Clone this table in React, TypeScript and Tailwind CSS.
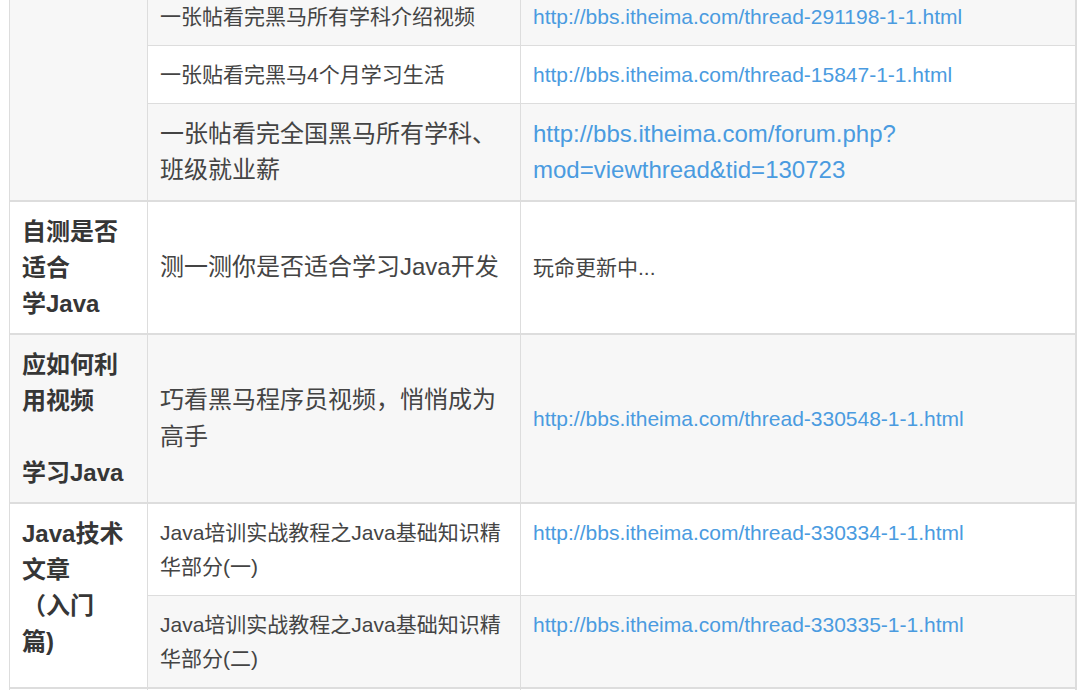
import React from 'react';

type Row = {
  text: React.ReactNode;
  big?: boolean;
  link?: React.ReactNode;
  linkBig?: boolean;
  plain?: boolean;
  top?: boolean;
};

type Group = {
  title?: React.ReactNode;
  rows: Row[];
};

const groups: Group[] = [
  {
    rows: [
      { text: '一张帖看完黑马所有学科介绍视频', link: 'http://bbs.itheima.com/thread-291198-1-1.html' },
      { text: '一张贴看完黑马4个月学习生活', link: 'http://bbs.itheima.com/thread-15847-1-1.html' },
      {
        text: '一张帖看完全国黑马所有学科、班级就业薪',
        big: true,
        linkBig: true,
        link: (
          <>
            http://bbs.itheima.com/forum.php?
            <br />
            mod=viewthread&amp;tid=130723
          </>
        ),
      },
    ],
  },
  {
    title: (
      <>
        自测是否
        <br />
        适合
        <br />
        学Java
      </>
    ),
    rows: [{ text: '测一测你是否适合学习Java开发', big: true, plain: true, link: '玩命更新中...' }],
  },
  {
    title: (
      <>
        应如何利
        <br />
        用视频
        <br />
        <br />
        学习Java
      </>
    ),
    rows: [
      { text: '巧看黑马程序员视频，悄悄成为高手', big: true, link: 'http://bbs.itheima.com/thread-330548-1-1.html' },
    ],
  },
  {
    title: (
      <>
        Java技术
        <br />
        文章
        <br />
        （入门
        <br />
        篇)
      </>
    ),
    rows: [
      { text: 'Java培训实战教程之Java基础知识精华部分(一)', top: true, link: 'http://bbs.itheima.com/thread-330334-1-1.html' },
      { text: 'Java培训实战教程之Java基础知识精华部分(二)', top: true, link: 'http://bbs.itheima.com/thread-330335-1-1.html' },
    ],
  },
  {
    title: <>&nbsp;</>,
    rows: [{ text: <>&nbsp;</>, link: <>&nbsp;</> }],
  },
];

export default function App() {
  let stripe = 0;

  return (
    <div className="h-[690px] w-[1084px] overflow-hidden bg-white font-['Liberation_Sans','Noto_Sans_CJK_SC',sans-serif]">
      <table className="-mt-[13px] ml-[9px] w-[1068px] table-fixed border-collapse border-l border-r-2 border-[#ddd]">
        <colgroup>
          <col className="w-[138px]" />
          <col className="w-[373px]" />
          <col />
        </colgroup>
        {groups.map((g, gi) => (
          <tbody key={gi} className={gi > 0 ? 'border-t-2 border-[#ddd]' : ''}>
            {g.rows.map((r, ri) => {
              const gray = stripe++ % 2 === 0;
              return (
                <tr key={ri} className={gray ? 'bg-[#f7f7f7]' : 'bg-white'}>
                  {ri === 0 && (
                    <td
                      rowSpan={g.rows.length}
                      className="border border-[#ddd] px-[12px] py-[11.5px] align-top whitespace-nowrap text-[24px] leading-[36px] font-bold text-[#363636]"
                    >
                      {g.title}
                    </td>
                  )}
                  <td
                    className={`border border-[#ddd] px-[12px] py-[11.5px] align-middle text-[#444] ${
                      r.big ? 'text-[24px] leading-[36.5px]' : 'text-[21px] leading-[34px]'
                    }`}
                  >
                    {r.text}
                  </td>
                  <td
                    className={`border border-[#ddd] px-[12px] py-[11.5px] ${r.top ? 'align-top' : 'align-middle'} ${
                      r.linkBig ? 'text-[24px] leading-[36.5px]' : 'text-[21px] leading-[34px]'
                    } ${r.plain ? 'text-[#444]' : 'text-[#4a9be0]'}`}
                  >
                    {r.link}
                  </td>
                </tr>
              );
            })}
          </tbody>
        ))}
      </table>
    </div>
  );
}
